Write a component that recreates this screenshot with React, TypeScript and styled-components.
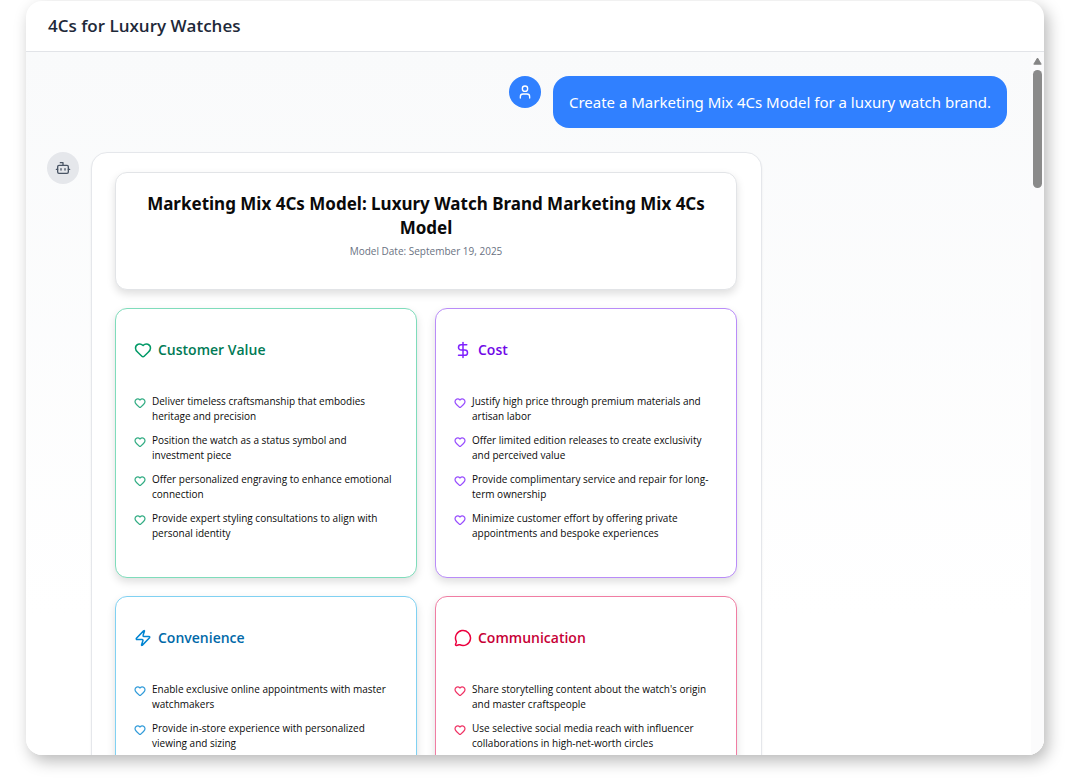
import React from "react";
import styled, { createGlobalStyle } from "styled-components";
import { Bot, DollarSign, Heart, MessageCircle, User, Zap } from "lucide-react";
import type { LucideIcon } from "lucide-react";

const GlobalStyle = createGlobalStyle`
  *, *::before, *::after { box-sizing: border-box; }
  body {
    margin: 0;
    background: #ffffff;
    color: #0a0a0a;
    font-family: "Segoe UI", "Open Sans", "Noto Sans", sans-serif;
    font-size: 15px;
  }
  h1, h2, h3, p, ul { margin: 0; padding: 0; }
`;

const Page = styled.div`
  height: 100vh;
  min-height: 320px;
  padding: 1px 22px 25px 26px;
  overflow: hidden;
`;

const Panel = styled.main`
  display: flex;
  flex-direction: column;
  height: 100%;
  overflow: hidden;
  border-radius: 16px;
  background: #ffffff;
  box-shadow: 4px 6px 16px rgba(0, 0, 0, 0.28);
`;

const Header = styled.header`
  flex: none;
  padding: 13px 22px;
  border-bottom: 1px solid #e2e4e8;
`;

const PageTitle = styled.h1`
  font-size: 17px;
  line-height: 24px;
  font-weight: 600;
  color: #1e2939;
`;

const Body = styled.div`
  display: flex;
  flex: 1;
  min-height: 0;
  background: linear-gradient(#f9fafb, #ffffff 80%);
`;

const Messages = styled.section`
  flex: 1;
  min-width: 0;
  display: flex;
  flex-direction: column;
  gap: 24px;
  padding: 24px 24px 24px 21px;
  overflow: hidden;
`;

const UserMessage = styled.div`
  flex: none;
  display: flex;
  justify-content: flex-end;
  gap: 12px;
`;

const BotMessage = styled.div`
  flex: none;
  display: flex;
  gap: 12px;
  width: calc(75% - 5px);
`;

const Avatar = styled.div<{ $background: string; $color: string }>`
  flex: none;
  display: grid;
  place-items: center;
  width: 32px;
  height: 32px;
  border-radius: 50%;
  background: ${(p) => p.$background};
  color: ${(p) => p.$color};
`;

const Bubble = styled.p`
  padding: 14px 16px;
  border-radius: 16px;
  background: #3080ff;
  color: #ffffff;
  font-family: "Noto Sans", sans-serif;
  line-height: 24px;
`;

const Reply = styled.article`
  flex: 1;
  min-width: 0;
  display: flex;
  flex-direction: column;
  gap: 18px;
  padding: 19px 24px 19px 23px;
  border: 1px solid #e5e7eb;
  border-radius: 16px;
  background: #ffffff;
  box-shadow: 0 1px 2px rgba(0, 0, 0, 0.08);
`;

const Card = styled.section<{ $border: string }>`
  border: 1px solid ${(p) => p.$border};
  border-radius: 12px;
  background: #ffffff;
  box-shadow: 0 4px 8px rgba(0, 0, 0, 0.13);
`;

const TitleCard = styled(Card)`
  padding: 19px 18px 30px;
  text-align: center;
`;

const ModelTitle = styled.h2`
  font-family: "Noto Sans", sans-serif;
  font-size: 17px;
  line-height: 24px;
  font-weight: 700;
`;

const ModelDate = styled.p`
  padding-top: 3px;
  font-size: 10px;
  line-height: 16px;
  color: #6a7282;
`;

const Quadrants = styled.div`
  display: grid;
  grid-template-columns: repeat(2, minmax(0, 1fr));
  gap: 18px;
`;

const QuadrantCard = styled(Card)`
  display: flex;
  flex-direction: column;
  gap: 32px;
  padding: 29px 18px 36px;
`;

const QuadrantTitle = styled.h3<{ $color: string; $icon: string }>`
  display: flex;
  align-items: center;
  gap: 6px;
  font-size: 14px;
  line-height: 24px;
  font-weight: 600;
  color: ${(p) => p.$color};

  svg { color: ${(p) => p.$icon}; }
`;

const Points = styled.ul`
  display: flex;
  flex-direction: column;
  gap: 9px;
  list-style: none;
`;

const Point = styled.li<{ $icon: string }>`
  display: flex;
  gap: 6px;
  font-size: 10px;
  line-height: 15px;

  svg {
    flex: none;
    margin-top: 3px;
    color: ${(p) => p.$icon};
    opacity: 0.8;
  }
`;

const ScrollTrack = styled.div`
  flex: none;
  display: flex;
  flex-direction: column;
  align-items: center;
  gap: 5px;
  width: 13px;
  padding-top: 5px;
  background: #fbfbfc;
`;

const ScrollArrow = styled.svg`
  width: 9px;
  height: 8px;
  fill: #858585;
  stroke: #858585;
  stroke-linejoin: round;
`;

const ScrollThumb = styled.div`
  width: 9px;
  height: 118px;
  border-radius: 5px;
  background: #8a8a8a;
`;

interface Quadrant {
  title: string;
  Icon: LucideIcon;
  border: string;
  icon: string;
  text: string;
  points: string[];
}

const quadrants: Quadrant[] = [
  {
    title: "Customer Value",
    Icon: Heart,
    border: "#7fdcbb",
    icon: "#009966",
    text: "#007a55",
    points: [
      "Deliver timeless craftsmanship that embodies heritage and precision",
      "Position the watch as a status symbol and investment piece",
      "Offer personalized engraving to enhance emotional connection",
      "Provide expert styling consultations to align with personal identity",
    ],
  },
  {
    title: "Cost",
    Icon: DollarSign,
    border: "#b98cf8",
    icon: "#7f22fe",
    text: "#7008e7",
    points: [
      "Justify high price through premium materials and artisan labor",
      "Offer limited edition releases to create exclusivity and perceived value",
      "Provide complimentary service and repair for long-term ownership",
      "Minimize customer effort by offering private appointments and bespoke experiences",
    ],
  },
  {
    title: "Convenience",
    Icon: Zap,
    border: "#80d1f2",
    icon: "#0084d1",
    text: "#0069a8",
    points: [
      "Enable exclusive online appointments with master watchmakers",
      "Provide in-store experience with personalized viewing and sizing",
    ],
  },
  {
    title: "Communication",
    Icon: MessageCircle,
    border: "#f07da3",
    icon: "#ec003f",
    text: "#c70036",
    points: [
      "Share storytelling content about the watch's origin and master craftspeople",
      "Use selective social media reach with influencer collaborations in high-net-worth circles",
    ],
  },
];

export default function App() {
  return (
    <>
      <GlobalStyle />
      <Page>
        <Panel>
          <Header>
            <PageTitle>4Cs for Luxury Watches</PageTitle>
          </Header>
          <Body>
            <Messages>
              <UserMessage>
                <Avatar $background="#3080ff" $color="#ffffff">
                  <User size={16} />
                </Avatar>
                <Bubble>Create a Marketing Mix 4Cs Model for a luxury watch brand.</Bubble>
              </UserMessage>
              <BotMessage>
                <Avatar $background="#e5e7eb" $color="#4a5565">
                  <Bot size={16} />
                </Avatar>
                <Reply>
                  <TitleCard $border="#e2e4e7">
                    <ModelTitle>
                      Marketing Mix 4Cs Model: Luxury Watch Brand Marketing Mix 4Cs Model
                    </ModelTitle>
                    <ModelDate>Model Date: September 19, 2025</ModelDate>
                  </TitleCard>
                  <Quadrants>
                    {quadrants.map(({ title, Icon, border, icon, text, points }) => (
                      <QuadrantCard key={title} $border={border}>
                        <QuadrantTitle $color={text} $icon={icon}>
                          <Icon size={18} />
                          {title}
                        </QuadrantTitle>
                        <Points>
                          {points.map((point) => (
                            <Point key={point} $icon={icon}>
                              <Heart size={12} strokeWidth={2.5} />
                              {point}
                            </Point>
                          ))}
                        </Points>
                      </QuadrantCard>
                    ))}
                  </Quadrants>
                </Reply>
              </BotMessage>
            </Messages>
            <ScrollTrack aria-hidden="true">
              <ScrollArrow viewBox="0 0 9 8">
                <path d="M4.5 1 8.2 7.2H0.8Z" />
              </ScrollArrow>
              <ScrollThumb />
            </ScrollTrack>
          </Body>
        </Panel>
      </Page>
    </>
  );
}
